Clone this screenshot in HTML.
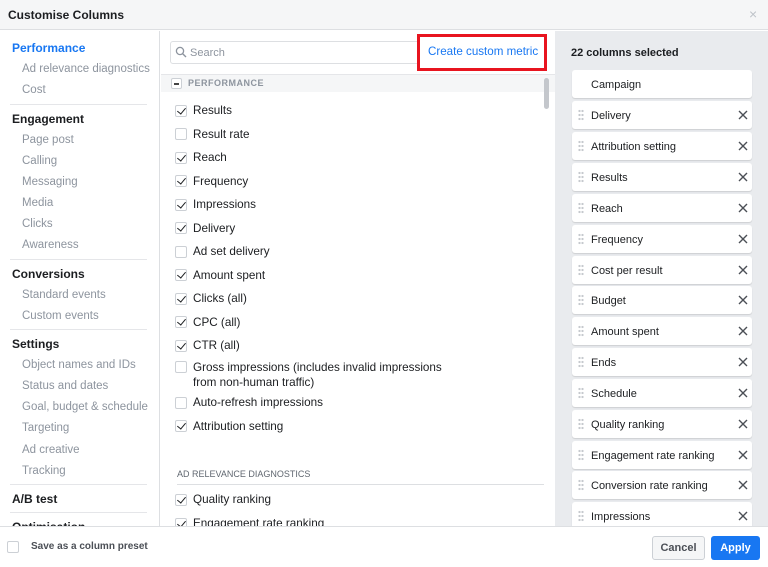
<!DOCTYPE html>
<html><head><style>
*{margin:0;padding:0;box-sizing:border-box}
body{width:768px;height:567px;overflow:hidden;position:relative;font-family:"Liberation Sans",Arial,sans-serif;font-size:12px;color:#1c1e21;background:#fff}
.a{position:absolute;white-space:nowrap}
.hdr{left:0;top:0;width:768px;height:30px;background:#f5f6f7;border-bottom:1px solid #dddfe2}
.nav{left:0;top:31px;width:160px;height:495px;border-right:1px solid #dddfe2;background:#fff}
.right{left:555px;top:31px;width:213px;height:495px;background:#e9ebee}
.foot{left:0;top:526px;width:768px;height:41px;background:#fff;border-top:1px solid #dddfe2}
.n{left:22px;color:#8d949e;font-size:11.5px}
.nb{left:12px;font-weight:bold;color:#1c1e21;font-size:12px}
.sep{left:10px;width:137px;height:1px;background:#e5e6e9}
.cb{left:175px;width:12px;height:12px;border:1px solid #ccd0d5;border-radius:2px;background:#fff;margin-top:1px}
.cb.c::after{content:"";position:absolute;left:3px;top:0px;width:4px;height:7px;border:solid #1c1e21;border-width:0 1.5px 1.5px 0;transform:rotate(40deg)}
.t{left:193px;font-size:11.7px;color:#1c1e21;margin-top:1px}
.box{left:572px;width:180px;height:28px;background:#fff;border-radius:3px;box-shadow:0 1px 1px rgba(0,0,0,.12)}
.box span{position:absolute;left:19px;top:9px;font-size:11px}
.box svg{position:absolute;right:4px;top:9px}
.box .d{position:absolute;left:6px;top:8px;width:6px;height:12px;background:radial-gradient(circle,#c6c9ce 1px,transparent 1.3px) 0 0/3px 4px}
</style></head><body>
<svg width="0" height="0" style="position:absolute"><defs><symbol id="x" viewBox="0 0 10 10"><path d="M1 1L9 9M9 1L1 9" stroke="#4b4f56" stroke-width="1.4"/></symbol></defs></svg>
<div class="a hdr"></div>
<div class="a" style="left:8px;top:8px;font-weight:bold;font-size:12px">Customise Columns</div>
<div class="a" style="left:749px;top:6px;font-size:14px;color:#bec3c9">×</div>

<div class="a nav"></div>
<div class="a nb" style="top:41px;color:#1877f2">Performance</div>
<div class="a n" style="top:63px">Ad relevance diagnostics</div>
<div class="a n" style="top:84px">Cost</div>
<div class="a sep" style="top:104px"></div>
<div class="a nb" style="top:112px">Engagement</div>
<div class="a n" style="top:134px">Page post</div>
<div class="a n" style="top:155px">Calling</div>
<div class="a n" style="top:176px">Messaging</div>
<div class="a n" style="top:197px">Media</div>
<div class="a n" style="top:218px">Clicks</div>
<div class="a n" style="top:239px">Awareness</div>
<div class="a sep" style="top:259px"></div>
<div class="a nb" style="top:267px">Conversions</div>
<div class="a n" style="top:289px">Standard events</div>
<div class="a n" style="top:310px">Custom events</div>
<div class="a sep" style="top:329px"></div>
<div class="a nb" style="top:337px">Settings</div>
<div class="a n" style="top:359px">Object names and IDs</div>
<div class="a n" style="top:380px">Status and dates</div>
<div class="a n" style="top:401px">Goal, budget &amp; schedule</div>
<div class="a n" style="top:422px">Targeting</div>
<div class="a n" style="top:444px">Ad creative</div>
<div class="a n" style="top:465px">Tracking</div>
<div class="a sep" style="top:484px"></div>
<div class="a nb" style="top:492px">A/B test</div>
<div class="a sep" style="top:512px"></div>
<div class="a nb" style="top:520px">Optimisation</div>

<div class="a" style="left:170px;top:41px;width:250px;height:23px;border:1px solid #dddfe2;border-radius:3px"></div>
<svg class="a" style="left:175px;top:46px" width="12" height="12" viewBox="0 0 12 12"><circle cx="5" cy="5" r="3.6" fill="none" stroke="#8d949e" stroke-width="1.3"/><path d="M7.7 7.7L11 11" stroke="#8d949e" stroke-width="1.4"/></svg>
<div class="a" style="left:190px;top:47px;color:#8d949e;font-size:11px">Search</div>
<div class="a" style="left:417px;top:34px;width:130px;height:37px;border:3px solid #e8141f"></div>
<div class="a" style="left:428px;top:45px;color:#1877f2;font-size:11.6px">Create custom metric</div>
<div class="a" style="left:161px;top:74px;width:394px;height:18px;background:#f5f6f7;border-top:1px solid #e5e6e9"></div>
<div class="a" style="left:171px;top:78px;width:11px;height:11px;border:1px solid #ccd0d5;background:#fff;border-radius:2px"><div style="position:absolute;left:2px;top:4px;width:5px;height:1.5px;background:#444"></div></div>
<div class="a" style="left:188px;top:78px;font-size:9px;font-weight:bold;color:#8d949e;letter-spacing:.5px">PERFORMANCE</div>
<div class="a" style="left:544px;top:78px;width:5px;height:31px;background:#c4c7cc;border-radius:3px"></div>

<div class="a cb c" style="top:104px"></div><div class="a t" style="top:103px">Results</div>
<div class="a cb" style="top:127px"></div><div class="a t" style="top:127px">Result rate</div>
<div class="a cb c" style="top:151px"></div><div class="a t" style="top:150px">Reach</div>
<div class="a cb c" style="top:174px"></div><div class="a t" style="top:174px">Frequency</div>
<div class="a cb c" style="top:198px"></div><div class="a t" style="top:197px">Impressions</div>
<div class="a cb c" style="top:221px"></div><div class="a t" style="top:221px">Delivery</div>
<div class="a cb" style="top:245px"></div><div class="a t" style="top:244px">Ad set delivery</div>
<div class="a cb c" style="top:268px"></div><div class="a t" style="top:268px">Amount spent</div>
<div class="a cb c" style="top:292px"></div><div class="a t" style="top:291px">Clicks (all)</div>
<div class="a cb c" style="top:315px"></div><div class="a t" style="top:315px">CPC (all)</div>
<div class="a cb c" style="top:339px"></div><div class="a t" style="top:338px">CTR (all)</div>
<div class="a cb" style="top:360px"></div><div class="a t" style="top:359px;line-height:15px">Gross impressions (includes invalid impressions<br>from non-human traffic)</div>
<div class="a cb" style="top:396px"></div><div class="a t" style="top:395px">Auto-refresh impressions</div>
<div class="a cb c" style="top:419px"></div><div class="a t" style="top:419px">Attribution setting</div>
<div class="a" style="left:177px;top:469px;font-size:9px;color:#606770">AD RELEVANCE DIAGNOSTICS</div>
<div class="a" style="left:177px;top:484px;width:367px;height:1px;background:#dddfe2"></div>
<div class="a cb c" style="top:493px"></div><div class="a t" style="top:492px">Quality ranking</div>
<div class="a cb c" style="top:517px"></div><div class="a t" style="top:516px">Engagement rate ranking</div>

<div class="a right"></div>
<div class="a" style="left:571px;top:47px;font-weight:bold;font-size:11px">22 columns selected</div>
<div class="a box" style="top:70px"><span>Campaign</span></div>
<div class="a box" style="top:101px"><i class="d"></i><span>Delivery</span><svg width="10" height="10"><use href="#x"/></svg></div>
<div class="a box" style="top:132px"><i class="d"></i><span>Attribution setting</span><svg width="10" height="10"><use href="#x"/></svg></div>
<div class="a box" style="top:163px"><i class="d"></i><span>Results</span><svg width="10" height="10"><use href="#x"/></svg></div>
<div class="a box" style="top:194px"><i class="d"></i><span>Reach</span><svg width="10" height="10"><use href="#x"/></svg></div>
<div class="a box" style="top:225px"><i class="d"></i><span>Frequency</span><svg width="10" height="10"><use href="#x"/></svg></div>
<div class="a box" style="top:256px"><i class="d"></i><span>Cost per result</span><svg width="10" height="10"><use href="#x"/></svg></div>
<div class="a box" style="top:286px"><i class="d"></i><span>Budget</span><svg width="10" height="10"><use href="#x"/></svg></div>
<div class="a box" style="top:317px"><i class="d"></i><span>Amount spent</span><svg width="10" height="10"><use href="#x"/></svg></div>
<div class="a box" style="top:348px"><i class="d"></i><span>Ends</span><svg width="10" height="10"><use href="#x"/></svg></div>
<div class="a box" style="top:379px"><i class="d"></i><span>Schedule</span><svg width="10" height="10"><use href="#x"/></svg></div>
<div class="a box" style="top:410px"><i class="d"></i><span>Quality ranking</span><svg width="10" height="10"><use href="#x"/></svg></div>
<div class="a box" style="top:441px"><i class="d"></i><span>Engagement rate ranking</span><svg width="10" height="10"><use href="#x"/></svg></div>
<div class="a box" style="top:471px"><i class="d"></i><span>Conversion rate ranking</span><svg width="10" height="10"><use href="#x"/></svg></div>
<div class="a box" style="top:502px"><i class="d"></i><span>Impressions</span><svg width="10" height="10"><use href="#x"/></svg></div>

<div class="a foot"></div>
<div class="a" style="left:7px;top:541px;width:12px;height:12px;border:1px solid #ccd0d5;border-radius:2px"></div>
<div class="a" style="left:31px;top:541px;font-size:10px;font-weight:bold;color:#4b4f56">Save as a column preset</div>
<div class="a" style="left:652px;top:536px;width:53px;height:24px;background:#f5f6f7;border:1px solid #ccd0d5;border-radius:3px;font-size:11px;font-weight:bold;color:#4b4f56;text-align:center;line-height:22px">Cancel</div>
<div class="a" style="left:711px;top:536px;width:49px;height:24px;background:#1877f2;border-radius:3px;font-size:11px;font-weight:bold;color:#fff;text-align:center;line-height:24px">Apply</div>
</body></html>
